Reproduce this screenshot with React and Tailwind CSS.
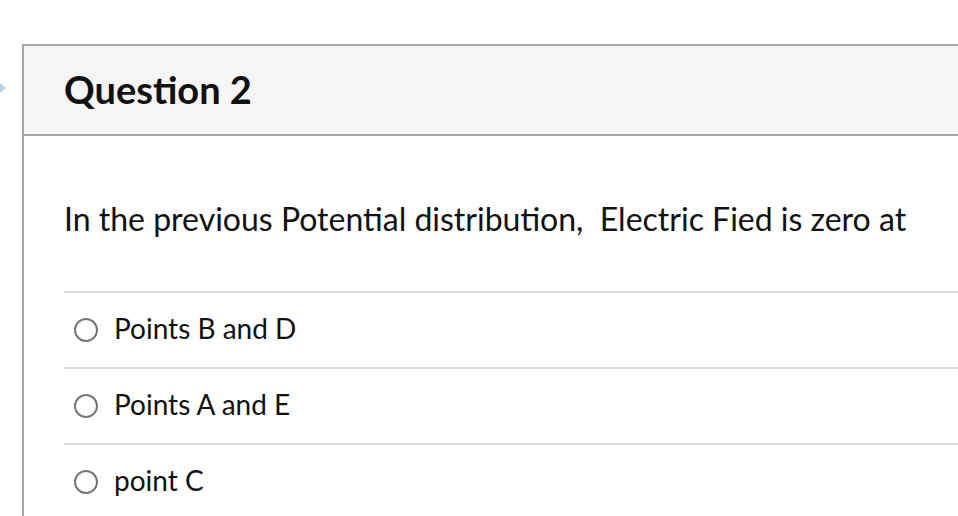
const options = ['Points B and D', 'Points A and E', 'point C']

export default function App() {
  return (
    <div
      className="relative h-[516px] w-[958px] overflow-hidden bg-white text-[#111]"
      style={{ fontFamily: 'Lato, "Noto Sans", sans-serif' }}
    >
      <svg className="absolute left-0 top-[78px]" width="8" height="20" viewBox="0 0 8 20">
        <path d="M-4 2 L6 10 L-4 18 Z" fill="#a9c3de" opacity="0.8" />
      </svg>
      <div className="ml-[22px] mt-[44px] w-[1000px] border-l-2 border-t-2 border-[#a8a8a8]">
        <div className="flex h-[90px] items-center border-b-2 border-[#a8a8a8] bg-[#f5f5f5] pl-[40px]">
          <h2 className="pb-[2px] text-[38px] font-bold leading-none">Question 2</h2>
        </div>
        <div className="pl-[40px]">
          <p className="pt-[65px] pb-[54px] text-[32px] leading-[36px]">
            In the previous Potential distribution,&nbsp; Electric Fied is zero at
          </p>
          {options.map((opt) => (
            <div key={opt} className="flex h-[76px] items-center border-t-2 border-[#dcdcdc]">
              <span className="ml-[10px] mr-[16px] h-[24px] w-[24px] shrink-0 rounded-full border-2 border-[#777]" />
              <span className="pb-[4px] text-[28px] leading-none">{opt}</span>
            </div>
          ))}
        </div>
      </div>
    </div>
  )
}
